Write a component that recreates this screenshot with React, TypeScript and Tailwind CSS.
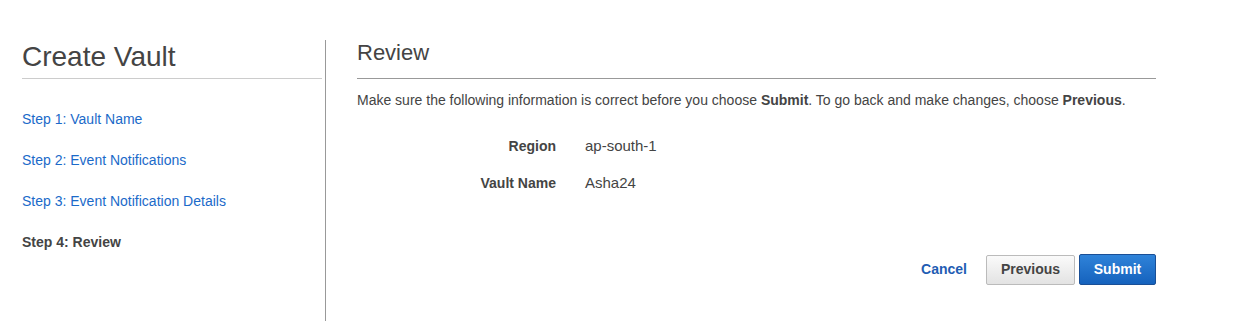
/**
 * Create Vault wizard — final review step.
 */

const steps = [
  { label: "Step 1: Vault Name", active: false },
  { label: "Step 2: Event Notifications", active: false },
  { label: "Step 3: Event Notification Details", active: false },
  { label: "Step 4: Review", active: true },
];

const details = [
  { label: "Region", value: "ap-south-1" },
  { label: "Vault Name", value: "Asha24" },
];

export default function App() {
  return (
    <div
      className="flex h-[321px] bg-white pt-[40px] text-[#444]"
      style={{ fontFamily: '"Liberation Sans", Arial, sans-serif' }}
    >
      {/* Sidebar */}
      <div className="w-[326px] shrink-0 border-r border-[#999] pl-[22px] pr-[3px]">
        <h1 className="mt-px border-b border-[#ccc] pb-[5px] text-[28px] leading-[32px] font-normal text-[#444]">
          Create Vault
        </h1>
        <ul className="mt-[30px]">
          {steps.map((s) => (
            <li
              key={s.label}
              className={`h-[41px] text-[14px] leading-[20px] ${
                s.active ? "font-bold text-[#444]" : "text-[#1b6ac9]"
              }`}
            >
              {s.label}
            </li>
          ))}
        </ul>
      </div>

      {/* Review panel */}
      <div className="w-[830px] pl-[31px]">
        <h2 className="border-b border-[#999] pb-[12px] text-[22px] leading-[26px] font-normal text-[#444]">
          Review
        </h2>
        <p className="mt-[12px] text-[14px] leading-[18px]">
          Make sure the following information is correct before you choose <b>Submit</b>. To go back and make
          changes, choose <b>Previous</b>.
        </p>

        <div className="mt-[27px] flex flex-col gap-[17px]">
          {details.map((d) => (
            <div key={d.label} className="flex items-center leading-[20px]">
              <div className="w-[199px] text-right text-[14px] font-bold">{d.label}</div>
              <div className="pl-[29px] text-[15px]">{d.value}</div>
            </div>
          ))}
        </div>

        {/* Actions */}
        <div className="mt-[61px] flex items-center justify-end">
          <button className="mr-[19px] text-[14px] font-bold text-[#1f5db3]">Cancel</button>
          <button className="h-[30px] w-[89px] rounded-[2px] border border-[#bbb] bg-gradient-to-b from-[#fafafa] to-[#e3e3e3] text-[14px] font-bold text-[#444]">
            Previous
          </button>
          <button className="ml-[4px] h-[31px] w-[77px] rounded-[2px] border border-[#1a4f96] bg-gradient-to-b from-[#2f83d9] to-[#1562bd] text-[14px] font-bold text-white">
            Submit
          </button>
        </div>
      </div>
    </div>
  );
}
